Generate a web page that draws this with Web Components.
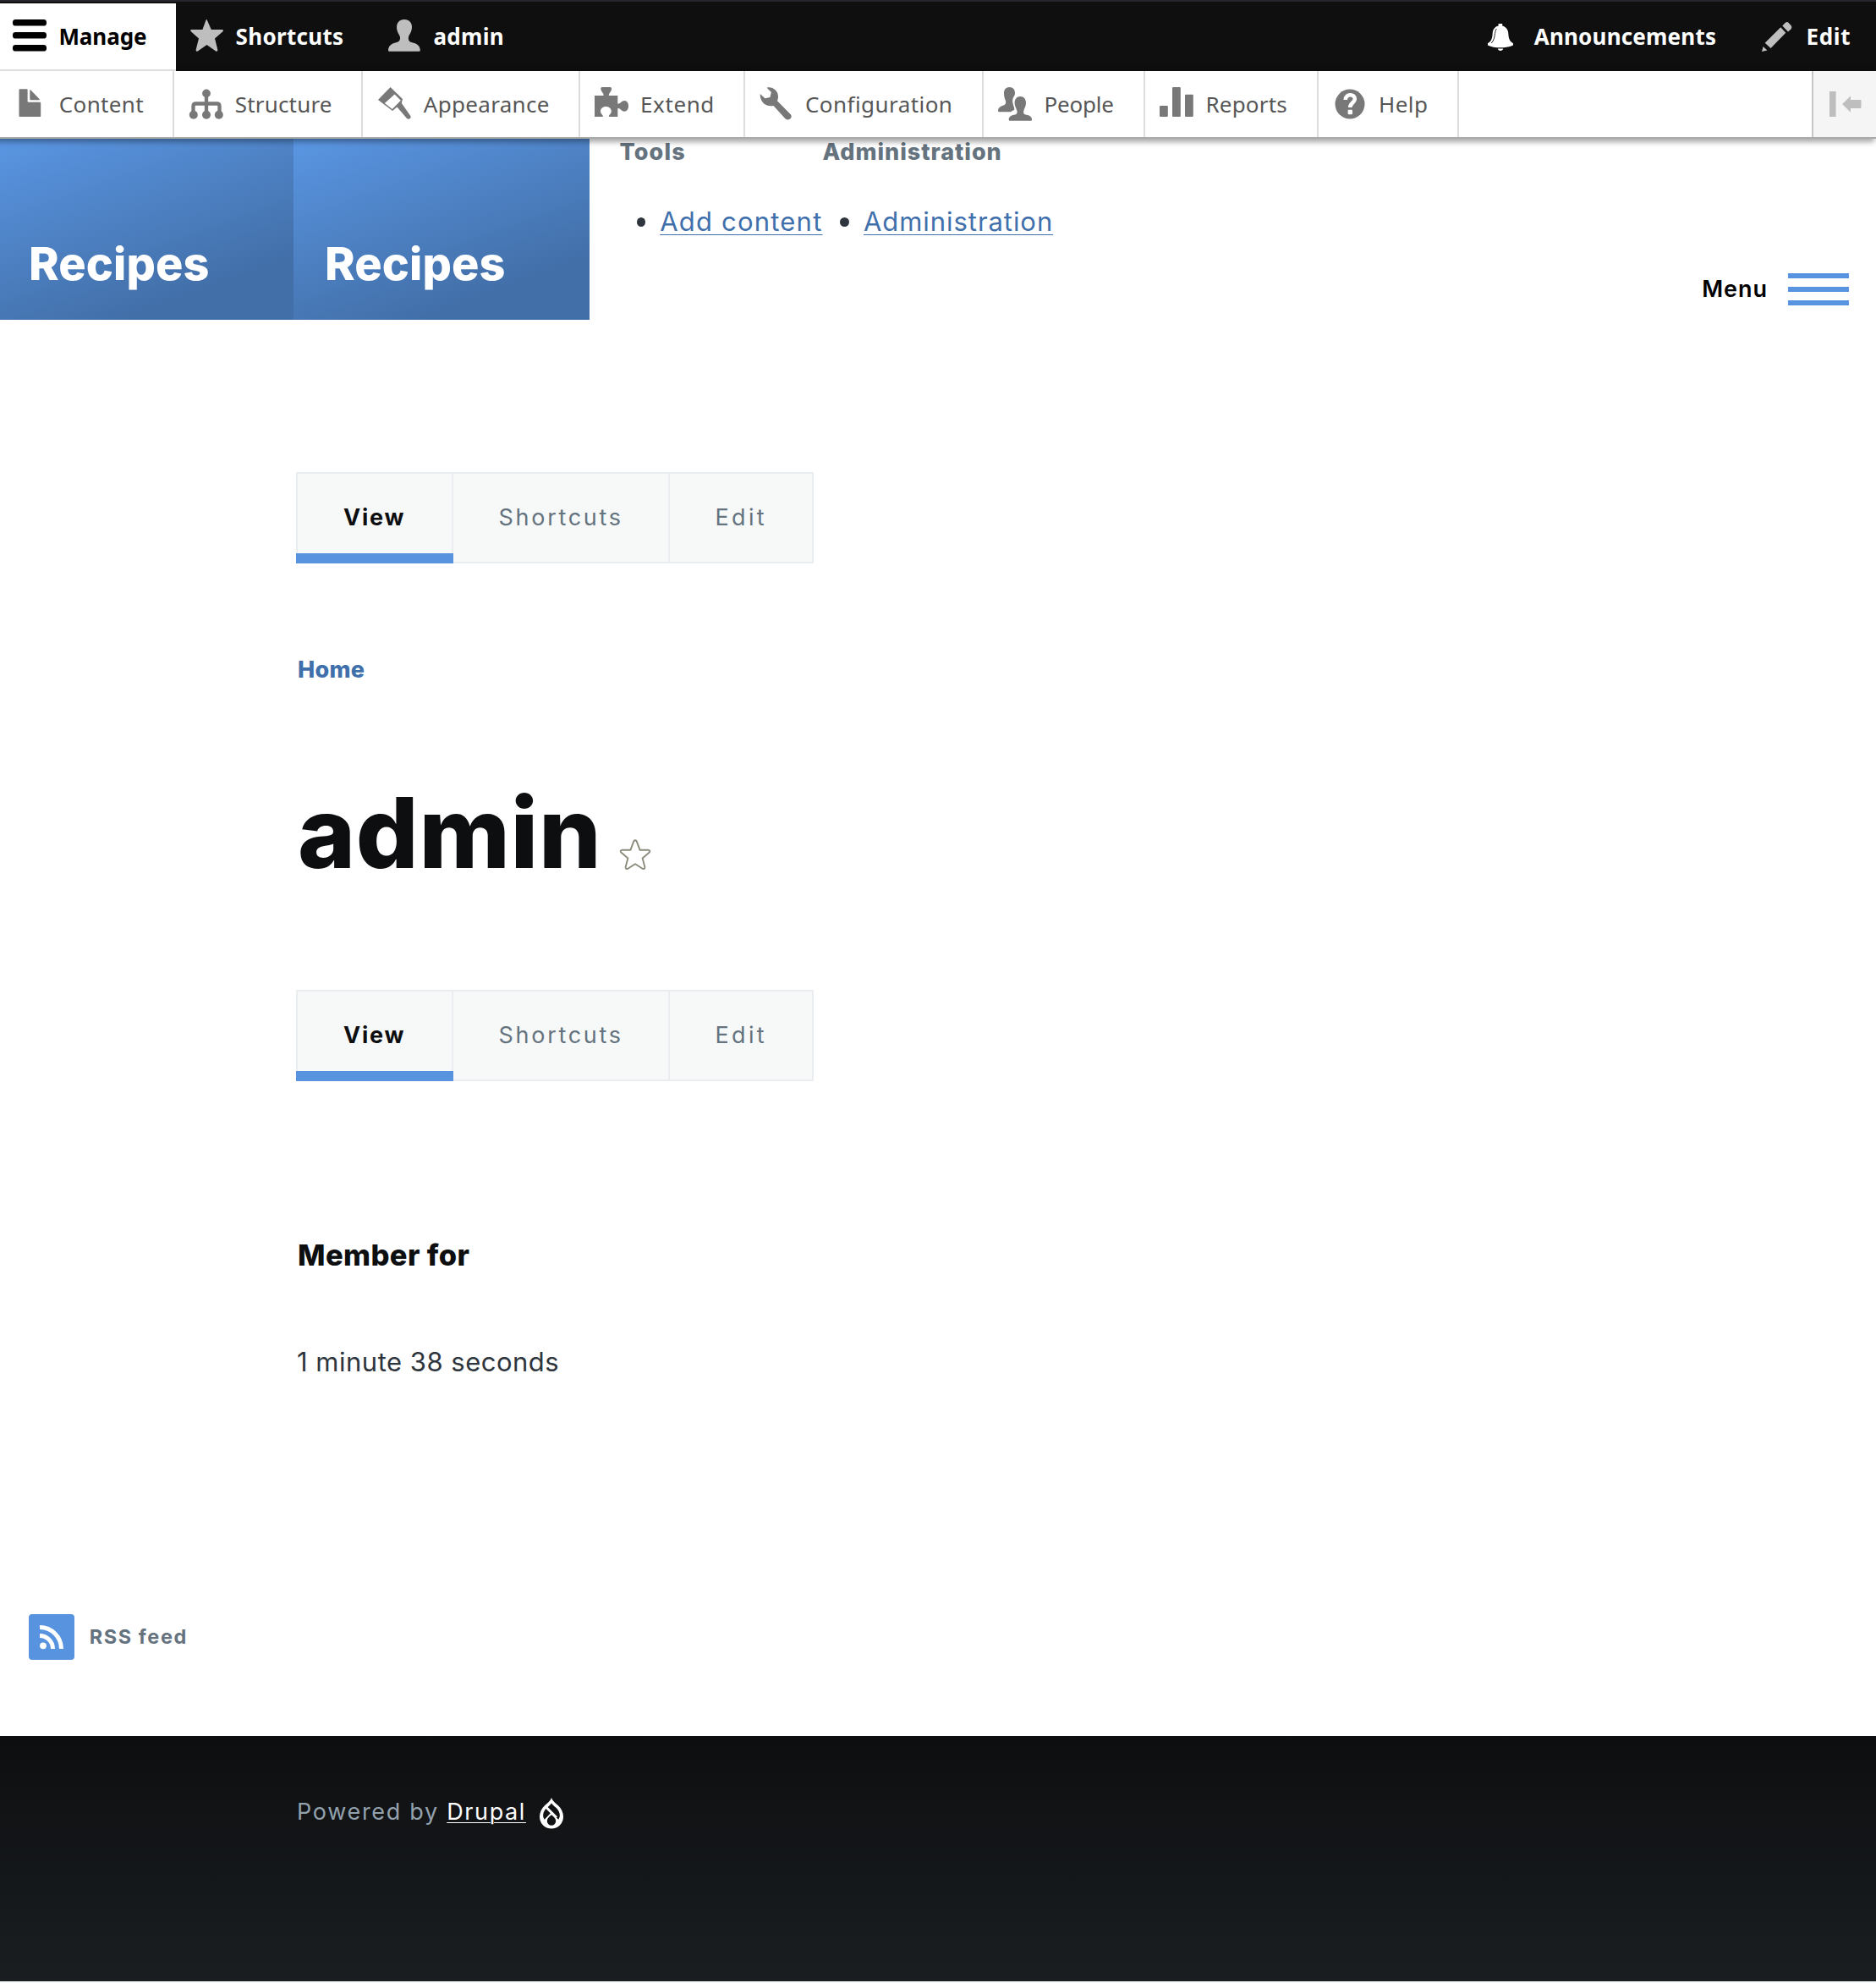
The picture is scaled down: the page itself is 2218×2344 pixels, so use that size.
<!DOCTYPE html>
<html lang="en">
<head>
<meta charset="utf-8">
<title>admin | Recipes</title>
<style>
  body {
    margin: 0;
    background: #fff;
    font-family: Inter, "Liberation Sans", sans-serif;
    color: #2e353d;
  }
</style>
</head>
<body>
<olivero-page>
  <admin-toolbar slot="toolbar">
    <toolbar-item slot="bar" icon="menu" active style="width:208px; --gap:14.4px; --ls:-0.08px">Manage</toolbar-item>
    <toolbar-item slot="bar" icon="star" style="width:233px; --ls:.3px">Shortcuts</toolbar-item>
    <toolbar-item slot="bar" icon="person" style="width:200px; --gap:14.4px; --ls:.3px">admin</toolbar-item>
    <toolbar-item slot="bar-end" icon="bell" style="width:326px; --gap:17.7px; --ls:.2px">Announcements</toolbar-item>
    <toolbar-item slot="bar-end" icon="pencil" style="width:153px; --ls:.6px">Edit</toolbar-item>

    <toolbar-item slot="tray" tray icon="file" style="width:206px; --start:15px; --gap:14.800px; --ls:.34px">Content</toolbar-item>
    <toolbar-item slot="tray" tray icon="orgchart" style="width:223px; --gap:14.800px; --ls:.17px">Structure</toolbar-item>
    <toolbar-item slot="tray" tray icon="paintbrush" style="width:257px; --gap:14.800px; --ls:.31px">Appearance</toolbar-item>
    <toolbar-item slot="tray" tray icon="puzzle" style="width:195px; --ls:.6px">Extend</toolbar-item>
    <toolbar-item slot="tray" tray icon="wrench" style="width:282px; --ls:.44px">Configuration</toolbar-item>
    <toolbar-item slot="tray" tray icon="people" style="width:191px; --gap:14.500px; --ls:-.2px">People</toolbar-item>
    <toolbar-item slot="tray" tray icon="barchart" style="width:205px; --gap:14.500px; --ls:.17px">Reports</toolbar-item>
    <toolbar-item slot="tray" tray icon="question" style="width:166px; --ls:.45px">Help</toolbar-item>
  </admin-toolbar>

  <site-header slot="header">
    <site-brand slot="brand" style="width:347px; --start:34px">Recipes</site-brand>
    <site-brand slot="brand" style="width:350px; --start:37px">Recipes</site-brand>
    <menu-block slot="blocks" heading="Tools" style="width:240px; --ls:1.1px; --link-ls:1.21px">Add content</menu-block>
    <menu-block slot="blocks" heading="Administration" style="--ls:.95px; --link-ls:.94px">Administration</menu-block>
    <menu-button slot="button">Menu</menu-button>
  </site-header>

  <nav-tabs style="margin-top:180px">
    <nav-tab active style="width:186px; --ls:1.74px">View</nav-tab>
    <nav-tab style="width:256px; --ls:2.7px">Shortcuts</nav-tab>
    <nav-tab style="width:170px; --ls:3.3px">Edit</nav-tab>
  </nav-tabs>
  <bread-crumb>Home</bread-crumb>
  <page-title>admin</page-title>
  <nav-tabs style="margin-top:116px">
    <nav-tab active style="width:186px; --ls:1.74px">View</nav-tab>
    <nav-tab style="width:256px; --ls:2.7px">Shortcuts</nav-tab>
    <nav-tab style="width:170px; --ls:3.3px">Edit</nav-tab>
  </nav-tabs>
  <user-field label="Member for">1 minute 38 seconds</user-field>

  <feed-link slot="feed">RSS feed</feed-link>
  <site-footer slot="footer">Drupal</site-footer>
</olivero-page>

<script>
// All toolbar icons share a 40x40 box.
const ICONS = {
  menu: `<rect y="1" width="40" height="7.6" rx="3.4"/><rect y="16" width="40" height="7.6" rx="3.4"/><rect y="31" width="40" height="7.6" rx="3.4"/>`,
  star: `<path d="M19.5 1 24.8 13H38q1.8.6.4 2.2L29 23.6 32.4 37q-.2 2.4-2.2 1.4L19.5 31 8.8 38.4q-2.2 1-2.2-1.4L10 23.6.8 15.2Q-.4 13.4 1.2 13h13.2L18.6 1.6q.5-1 .9-.6z"/>`,
  person: `<path d="M20 1c6 0 9 4 9 9 0 6-3.6 9-4 12-.4 4 1 5.500 5 6.500 6 1.500 8.500 4 8.800 9q0 1.300-1.500 1.300H2.500Q1 38.800 1 37.500c.4-5 3-7.500 8.500-9 4-1 5.900-2.500 5.500-6.500-.4-3-4-6-4-12 0-5 3-9 9-9z"/>`,
  bell: `<path d="M15.600 6h4.600v2.600c4.300 1 6.600 4 7 8 .5 6 .8 10 5.800 12.700v2.200c-4 2-9 2.800-15 2.800s-11-.8-15-2.800v-2.200c5-2.700 5.300-6.700 5.800-12.700.4-4 2.600-7 6.800-8zM14.800 35.600h6.400c-.3 3.200-6.100 3.200-6.400 0z"/><path d="M13.400 12c-3 3.400-.8 11.500-6.200 17" fill="none" stroke="#0f0f0f" stroke-width=".9"/>`,
  pencil: `<path d="M4.700 28.700 23.300 10.300l6 6.400L11.500 35zM25.300 8.600l3.400-3.600q2-1.800 4 0l3 3.200q1.500 2 0 4L32 15.500zM2.600 33l4.800 4.600L1 39z"/>`,
  file: `<path d="M8.600 2.300h8.200q.8 0 .8.800v13.600q0 1 1 1h13.600q1 0 1 1v15.500q0 .9-1 .9H8.500q-1 0-1-1V3.300q0-1 1.100-1zM20.300 4q0-1.700 1.100-.5l10.200 10.600q.8 1.100-.5 1.100h-9.800q-1 0-1-1z"/>`,
  orgchart: `<g fill="none" stroke="#787878" stroke-width="4.300"><path d="M21 8v24M5.500 31v-8.500q0-3 3-3h25q3 0 3 3V31"/></g><circle cx="21" cy="7.400" r="4.900"/><circle cx="5.800" cy="32.700" r="5"/><circle cx="21" cy="32.700" r="5"/><circle cx="35.800" cy="32.700" r="5"/>`,
  paintbrush: `<path fill-rule="evenodd" d="M15.600 0 30 14 28.800 19 39 33.500c2.200 3.200-2 5.800-4.400 3L23.500 23.500 18 28 1 15zM20.600 8.500 8.800 19 17.800 26 27.800 15.800z"/>`,
  puzzle: `<path d="M9.500 0h8.500c2.500 0 2.500 2.400 1.500 4.200-1 2-2.700 3.300-2.700 5.800h10.500v9.600c3.500.4 4.200-3.600 8-3.600 6.400 0 6.400 12.700 0 12.700-3.800 0-4.500-4-8-3.700v10H17c-.6-2.500 2.800-3 2.800-6.500 0-7.400-12.800-7.400-12.800 0 0 3.500 3.400 4 2.800 6.500H0V10h10.700c0-2.500-1.700-3.800-2.700-5.800S7 0 9.500 0z"/>`,
  wrench: `<path d="M8.600.8C14-1.200 22 3.500 22 11c0 2-.4 3.500-1 5.300l16 16.200c2.500 4-2.800 8-6.600 4.700L16.500 22C7.500 24 0 17 .8 8l5.600 5.300 6-1.300 1.500-6z"/>`,
  people: `<path d="M13.500 0c4.200 0 6.500 3 6.500 7 0 1.800-.6 3-1.200 4-1.800 2-2 5.500-1.200 8.500.6 2.500 2 5 1.600 7.300-1.600 1-3 1.500-4 2.500H1.200Q0 29.300 0 28c.2-4 3-5.400 6.500-6.500 3-1 3.200-3.600 2-6.500C7.500 12.500 7 10.500 7 7c0-4 2.300-7 6.500-7z"/><path stroke="#fff" stroke-width="3" paint-order="stroke" d="M26.300 11c4.300 0 6.700 3.400 6.700 7.600 0 4-1.600 6-2.500 8.600-1 3.500 0 5 3.200 5.600 4 .9 6.300 2.400 6.300 5.600q0 1.300-1.200 1.300H13.900q-1.200 0-1.200-1.300c0-3.200 2.300-4.700 6.300-5.600 3.200-.6 4.200-2.100 3.200-5.600-.9-2.600-2.600-4.600-2.600-8.600 0-4.200 2.400-7.600 6.700-7.600z"/>`,
  barchart: `<rect y="22" width="9.800" height="13" rx="1"/><rect x="15" width="9.800" height="35" rx="1"/><rect x="30" y="8.700" width="9.800" height="26.300" rx="1"/>`,
  question: `<circle cx="20" cy="20" r="17.500"/><path d="M14.800 15c0-7.500 11-7.500 11-1 0 4.500-5.600 4.700-5.600 10" fill="none" stroke="#fff" stroke-width="4.600"/><rect x="17.600" y="26.800" width="5.400" height="5.400" rx="1" fill="#fff"/>`
};

// Small helper: every element here is a template cloned into an open root.
function define(name, html, setup) {
  const template = document.createElement('template');
  template.innerHTML = html;
  customElements.define(name, class extends HTMLElement {
    constructor() {
      super();
      this.attachShadow({mode: 'open'}).appendChild(template.content.cloneNode(true));
    }
    connectedCallback() {
      if (setup) setup(this, this.shadowRoot);
    }
  });
}

define('olivero-page', `
  <style>
    :host { display: flex; flex-direction: column; min-height: 2344px; background: #f7f9f9; }
    main { display: flex; flex-direction: column; padding-left: 350px; }
    .body { background: #fff; padding-bottom: 90px; }
  </style>
  <slot name="toolbar"></slot>
  <div class="body">
    <slot name="header"></slot>
    <main><slot></slot></main>
    <slot name="feed"></slot>
  </div>
  <slot name="footer"></slot>
`);

define('admin-toolbar', `
  <style>
    :host {
      display: block;
      position: relative;
      z-index: 2;
      font: 26px/34px "Noto Sans", "Open Sans", sans-serif;
    }
    .bar {
      display: flex;
      box-sizing: border-box;
      height: 84px;
      border-top: 2px solid #26262f;
      padding-top: 2px;
      background: #0f0f0f;
    }
    .end { display: flex; margin-left: auto; }
    .tray {
      display: flex;
      height: 78px;
      background: #fff;
      border-bottom: 2px solid #aaa;
      box-shadow: -4px 2px 6px 2px rgba(0, 0, 0, .333);
    }
    .toggle {
      display: flex;
      align-items: center;
      box-sizing: border-box;
      width: 76px;
      margin-left: auto;
      padding-left: 19px;
      border-left: 2px solid #c6c6c6;
      background: #f5f5f5;
    }
  </style>
  <div class="bar"><slot name="bar"></slot><div class="end"><slot name="bar-end"></slot></div></div>
  <div class="tray">
    <slot name="tray"></slot>
    <div class="toggle">
      <svg width="40" height="30" fill="#bebebe"><path d="M0 0h7.600v30H0zM15 15 25 5.500V10h11.500q1 0 1 1v8q0 1-1 1H25v4.700z"/></svg>
    </div>
  </div>
`);

define('toolbar-item', `
  <style>
    :host {
      display: flex;
      align-items: center;
      box-sizing: border-box;
      padding-left: var(--start, 17px);
      gap: var(--gap, 13.6px);
      height: 80px;
      color: #fff;
      font-weight: 700;
      letter-spacing: var(--ls, 0);
      white-space: nowrap;
      padding-bottom: 2px;
    }
    :host([active]) {
      --start: 15px;
      background: #fff;
      border-bottom: 2px solid #ddd;
      padding-bottom: 0;
      color: #000;
    }
    :host([tray]) {
      --gap: 14px;
      height: 78px;
      padding-bottom: 0;
      border-right: 2px solid #ddd;
      color: #565656;
      font-weight: 400;
    }
    svg { flex: none; fill: #bebebe; overflow: visible; margin-top: -2px; }
    :host([active]) svg { fill: #000; }
    :host([icon="bell"]) svg { fill: #fff; }
    :host([tray]) svg { fill: #787878; margin-top: 0; }
  </style>
  <svg width="40" height="40" viewBox="0 0 40 40"></svg>
  <span><slot></slot></span>
`, (host, root) => {
  root.querySelector('svg').innerHTML = ICONS[host.getAttribute('icon')];
});

define('site-header', `
  <style>
    :host { display: flex; height: 214px; padding-right: 32px; }
    .blocks { display: flex; padding-left: 35.500px; }
    .button { display: flex; align-items: flex-end; margin-left: auto; padding-bottom: 17px; }
  </style>
  <slot name="brand"></slot>
  <div class="blocks"><slot name="blocks"></slot></div>
  <div class="button"><slot name="button"></slot></div>
`);

define('site-brand', `
  <style>
    :host {
      display: flex;
      align-items: flex-end;
      box-sizing: border-box;
      padding: 0 0 36px var(--start);
      background: linear-gradient(160deg, #5a96e3 0%, #426fa8 78.66%);
      color: #fff;
      font: 800 54px/60px Inter, sans-serif;
      letter-spacing: .1px;
    }
  </style>
  <span><slot></slot></span>
`);

define('menu-block', `
  <style>
    :host { display: block; white-space: nowrap; }
    h2 { margin: 0 0 40px; padding-top: 1px; font: 800 27px/30px Inter, sans-serif; letter-spacing: var(--ls); color: #65737f; }
    ul { margin: 0; padding: 0; list-style: none; }
    li { display: flex; align-items: center; gap: 17px; padding-left: 20.5px; font-size: 31px; line-height: 54px; }
    li::before { content: ""; width: 11px; height: 11px; border-radius: 50%; background: #2e353d; }
    a {
      color: #3f70ac;
      letter-spacing: var(--link-ls);
      text-decoration: underline;
      text-decoration-thickness: 1px;
      text-underline-offset: 4px;
    }
  </style>
  <h2></h2>
  <ul><li><a><slot></slot></a></li></ul>
`, (host, root) => {
  root.querySelector('h2').textContent = host.getAttribute('heading');
});

define('menu-button', `
  <style>
    :host { display: flex; align-items: center; gap: 24px; height: 38px; color: #000; font: 600 27px/36px Inter, sans-serif; letter-spacing: .97px; }
    .lines { display: flex; flex-direction: column; justify-content: space-between; width: 72px; height: 38px; }
    i { height: 6px; background: #5893df; }
  </style>
  <span><slot></slot></span>
  <div class="lines"><i></i><i></i><i></i></div>
`);

define('nav-tabs', `
  <style>
    :host { display: flex; box-sizing: border-box; width: 612px; height: 108px; }
  </style>
  <slot></slot>
`);

define('nav-tab', `
  <style>
    :host {
      display: flex;
      align-items: center;
      position: relative;
      box-sizing: border-box;
      padding: 0 0 2px 53.6px;
      border: solid #e9edf0;
      border-width: 2px 2px 2px 0;
      background: #f7f9f9;
      color: #65737f;
      font-size: 27px;
      letter-spacing: var(--ls);
    }
    :host([active]) { border-left-width: 2px; padding-left: 54px; color: #0d0e10; font-weight: 650; }
    /* The bar covers the side borders as well. */
    :host([active])::after { content: ""; position: absolute; left: -2px; right: -2px; bottom: -2px; height: 12px; background: #5893df; }
  </style>
  <span><slot></slot></span>
`);

define('bread-crumb', `
  <style>
    :host { display: block; margin: 106px 0 0 2px; color: #3f70ac; font: 800 27px/40px Inter, sans-serif; letter-spacing: .3px; }
  </style>
  <slot></slot>
`);

define('page-title', `
  <style>
    :host { display: flex; margin: 102px 0 0 2px; height: 140px; }
    h1 { margin: 0; width: 381px; font: 800 116px/140px Inter, sans-serif; letter-spacing: .6px; color: #0d0e10; }
    svg { margin-top: 77.500px; overflow: visible; }
  </style>
  <h1><slot></slot></h1>
  <svg width="36" height="36" fill="none" stroke="#8c8b7b" stroke-width="1.900" stroke-linejoin="round">
    <path d="M16.400 2.200Q18 .2 19.600 2.200L23.600 12.800H33.800Q36.200 13.400 34.700 15.600L26.600 22.400 29.400 33Q29.300 35.600 27 35L18 29.200 9 35Q6.700 35.600 6.600 33L9.400 22.400 1.300 15.600Q-.2 13.400 2.200 12.800H12.400Z"/>
  </svg>
`);

define('user-field', `
  <style>
    :host { display: block; margin: 181px 0 0 1px; height: 178px; font-size: 31px; line-height: 54px; letter-spacing: .5px; }
    h4 { margin: 0 0 74px 1px; font: 800 34.500px/50px Inter, sans-serif; letter-spacing: .4px; color: #0d0e10; }
  </style>
  <h4></h4>
  <slot></slot>
`, (host, root) => {
  root.querySelector('h4').textContent = host.getAttribute('label');
});

define('feed-link', `
  <style>
    :host { display: flex; align-items: center; gap: 17.700px; margin: 271px 0 0 34px; color: #65737f; font: 700 23.500px/30px Inter, sans-serif; letter-spacing: 1.6px; }
  </style>
  <svg width="54" height="54">
    <rect width="54" height="54" rx="4" fill="#5893df"/>
    <g fill="none" stroke="#fff" stroke-width="5"><path d="M13 15.500c14 0 25.500 11.500 25.500 25.500"/><path d="M13 25.500c8.500 0 15.500 7 15.500 15.500"/></g>
    <circle cx="17" cy="37.300" r="3.900" fill="#fff"/>
  </svg>
  <span><slot></slot></span>
`);

define('site-footer', `
  <style>
    :host {
      display: flex;
      align-items: flex-start;
      box-sizing: border-box;
      height: 290px;
      padding: 70px 0 0 351px;
      background: linear-gradient(#0d0e10, #1a1e21);
      color: #93a1ad;
      font: 27px/40px Inter, sans-serif;
      letter-spacing: 1.7px;
    }
    a { color: #fff; letter-spacing: 1.6px; text-decoration: underline; text-decoration-thickness: 1px; text-underline-offset: 3px; }
    svg { margin: 3px 0 0 16.500px; }
  </style>
  <span>Powered by <a><slot></slot></a></span>
  <svg width="28" height="37">
    <path fill="#fff" d="M14 0c1.600 4.500 5 6.200 8 9.300 3.600 3.600 6 8 6 13.200 0 8-6.200 14-14 14s-14-6-14-14c0-5.200 2.400-9.600 6-13.200 3-3.100 6.400-4.800 8-9.300z"/>
    <path fill="#111315" d="M14 6.500c2 3 5 4.500 7 7 3 3.700 4 8.500 1.200 12.200L13.800 17.300 5.800 25.700C3 22 4 17.200 7 13.500c2-2.500 5-4 7-7z"/>
    <path stroke="#fff" stroke-width="3" d="M8 11.500 20 23.500"/>
    <path fill="#111315" d="M14 20.300c3 2.500 5.200 4.200 5.200 7.200a5.200 5.200 0 0 1-10.400 0c0-3 2.200-4.700 5.200-7.200z"/>
  </svg>
`);
</script>
</body>
</html>
